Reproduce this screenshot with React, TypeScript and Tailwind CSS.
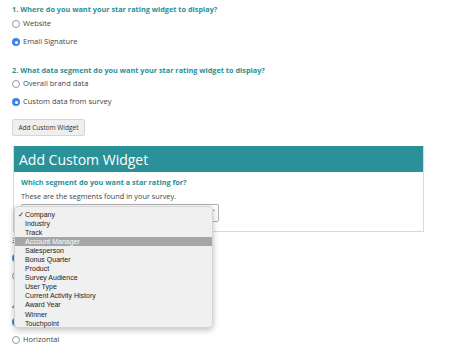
import React from "react";

function Radio({ checked }: { checked?: boolean }) {
  return checked ? (
    <span className="w-[8px] h-[8px] rounded-full bg-[#3d84e6] flex items-center justify-center shrink-0">
      <span className="w-[3px] h-[3px] rounded-full bg-white" />
    </span>
  ) : (
    <span className="w-[8px] h-[8px] rounded-full bg-white border border-[#9a9a9a] shrink-0" />
  );
}

function RadioRow({ label, checked, mt }: { label: string; checked?: boolean; mt: string }) {
  return (
    <div className={`h-[12px] flex items-center gap-[3px] ${mt}`}>
      <Radio checked={checked} />
      <span className="text-[7.5px] text-[#444]">{label}</span>
    </div>
  );
}

const items = [
  "Company",
  "Industry",
  "Track",
  "Account Manager",
  "Salesperson",
  "Bonus Quarter",
  "Product",
  "Survey Audience",
  "User Type",
  "Current Activity History",
  "Award Year",
  "Winner",
  "Touchpoint",
];

export default function App() {
  return (
    <div className="relative w-[474px] h-[356px] bg-white overflow-hidden font-['Open_Sans',sans-serif]">
      <div className="flex flex-col pl-[12px]">
        <div className="h-[12px] mt-[3px] flex items-center text-[7.3px] font-bold text-[#2a8f99]">
          1. Where do you want your star rating widget to display?
        </div>
        <RadioRow label="Website" mt="mt-[3px]" />
        <RadioRow label="Email Signature" checked mt="mt-[6px]" />
        <div className="h-[12px] mt-[16px] flex items-center text-[7.3px] font-bold text-[#2a8f99]">
          2. What data segment do you want your star rating widget to display?
        </div>
        <RadioRow label="Overall brand data" mt="mt-[2px]" />
        <RadioRow label="Custom data from survey" checked mt="mt-[6px]" />
        <div className="mt-[11px]">
          <button className="h-[17px] w-[73px] bg-[#efefef] border border-[#d6d6d6] rounded-[2px] text-[6.5px] text-[#333] flex items-center justify-center">
            Add Custom Widget
          </button>
        </div>
        <div className="mt-[10px] ml-[1px] w-[411px] border border-[#d9d9d9] border-t-0">
          <div className="h-[26px] bg-[#2a9199] flex items-center pl-[5px] text-[14px] text-white">
            Add Custom Widget
          </div>
          <div className="pl-[7px] pb-[9px]">
            <div className="h-[12px] mt-[4px] flex items-center text-[7.3px] font-bold text-[#2a8f99]">
              Which segment do you want a star rating for?
            </div>
            <div className="h-[12px] mt-[2px] flex items-center text-[7.3px] text-[#444]">
              These are the segments found in your survey.
            </div>
            <div className="mt-[2px] w-[198px] h-[18px] border border-[#b0b0b0] rounded-[2px] bg-white flex items-start justify-end pr-[2px] pt-[1px]">
              <span className="text-[6px] leading-[6px] text-[#555]">⌄</span>
            </div>
          </div>
        </div>
        <div className="h-[12px] mt-[2px] flex items-center text-[7.3px] font-bold text-[#2a8f99]">
          3. Which style?
        </div>
        <RadioRow label="Stars" checked mt="mt-[6px]" />
        <RadioRow label="Rating" mt="mt-[6px]" />
        <div className="h-[12px] mt-[18px] flex items-center text-[7.3px] font-bold text-[#2a8f99]">
          4. Layout?
        </div>
        <RadioRow label="Vertical" checked mt="mt-[4px]" />
        <RadioRow label="Horizontal" mt="mt-[6px]" />
      </div>

      <div className="absolute left-[14px] top-[206px] w-[199px] h-[122px] bg-[#f0f0f0] border border-[#d4d4d4] rounded-[4px] shadow-[0_2px_6px_rgba(0,0,0,0.25)] pt-[2.5px] font-['Liberation_Sans',sans-serif]">
        {items.map((it, i) => (
          <div
            key={it}
            className={`relative h-[9.1px] leading-[9.1px] pl-[10px] text-[7px] ${
              i === 3 ? "bg-[#a6a6a6] text-white" : "text-[#222]"
            }`}
          >
            {i === 0 && <span className="absolute left-[2.5px] top-0 text-[6.5px]">✓</span>}
            {it}
          </div>
        ))}
      </div>
    </div>
  );
}
